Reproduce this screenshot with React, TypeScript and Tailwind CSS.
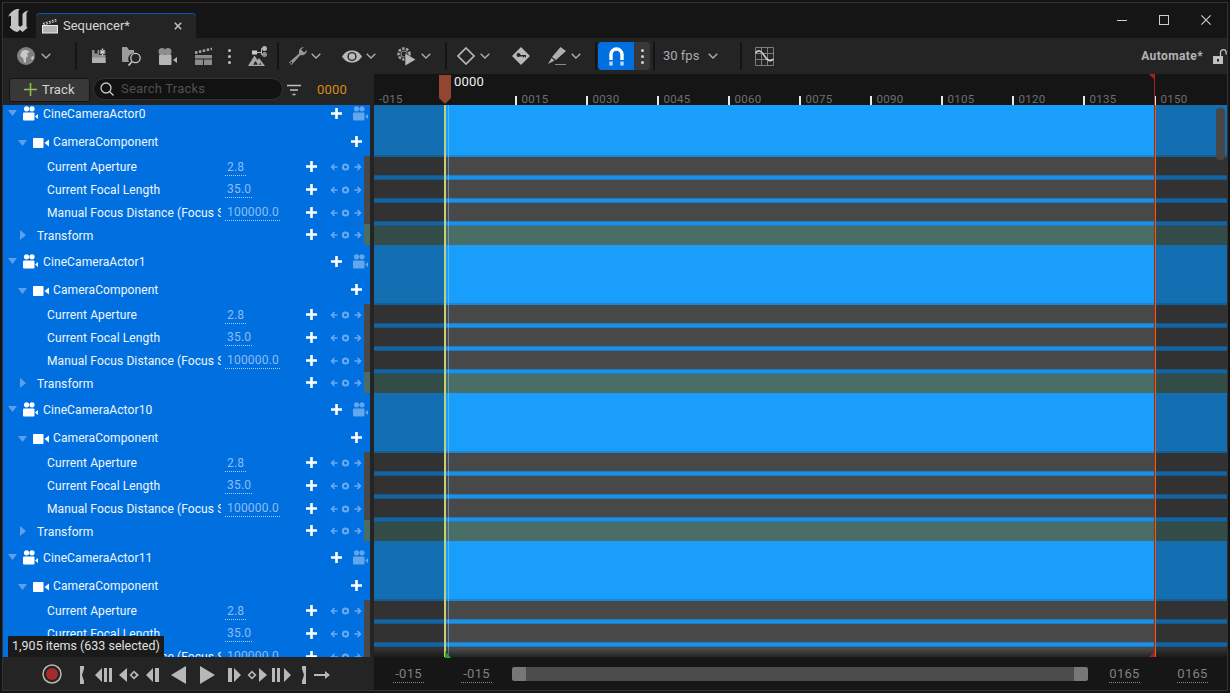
import React from "react";

const ticks = ["-015", "", "0015", "0030", "0045", "0060", "0075", "0090", "0105", "0120", "0135", "0150"];
const actors = ["CineCameraActor0", "CineCameraActor1", "CineCameraActor10", "CineCameraActor11"];

const Chevron = ({ className = "" }: { className?: string }) => (
    <svg width="10" height="6" viewBox="0 0 10 6" className={`shrink-0 ${className}`}>
        <path d="M.7.7 5 5l4.3-4.3" fill="none" stroke="#b0b0b0" strokeWidth="1.3" />
    </svg>
);

const Sep = ({ className = "" }: { className?: string }) => <div className={`w-[2px] h-[28px] shrink-0 bg-[#141414] ${className}`} />;

const UnrealLogo = () => (
    <svg width="24" height="25" viewBox="0 0 24 25" className="shrink-0">
        <path
            d="M10 1C6 2 2.500 5 1 9c1-1 2-1.500 2.500-1.200.5.400.5 1 .5 2v7c0 1-.7 1.700-1.500 2.200 2.500 3 5 4.500 8 5l2.500-2.200 2.500 2.200 5.500-4.500c-.8.300-1.500 0-1.500-1V6c0-1.500 1-2.500 2-3.500-2 .3-4.500 1.500-6 3.500v11l-2 1.700-2-1V4.500c0-1.500.2-2.500 1-3.500z"
            fill="#c4c4c4"
        />
        <path d="M7.500 7.500v10l2.200 1.800V5.500z" fill="#c4c4c4" />
    </svg>
);

const ClapperIcon = ({ fill = "#b4b4b4" }: { fill?: string }) => (
    <svg width="16" height="16" viewBox="0 0 16 16" className="shrink-0">
        <path d="m1 5.500 13-4 .5 1.500-13 4z" fill="none" stroke="#e0e0e0" strokeWidth="1" strokeDasharray="2 1" />
        <rect x=".5" y="7.500" width="15" height="7.500" fill={fill} stroke="#e8e8e8" />
    </svg>
);

const CameraGroup = ({ color = "#ffffff" }: { color?: string }) => (
    <svg width="15" height="15" viewBox="0 0 15 15" className="shrink-0">
        <circle cx="3.500" cy="2.800" r="2.600" fill={color} />
        <circle cx="9" cy="2.800" r="2.600" fill={color} />
        <rect x="0" y="6.500" width="11.500" height="8" rx="1" fill={color} />
        <path d="M15 8v5l-3-2.500z" fill={color} />
    </svg>
);

const CameraIcon = () => (
    <svg width="16" height="10" viewBox="0 0 16 10" className="shrink-0">
        <rect width="10.500" height="10" rx=".8" fill="#fff" />
        <path d="M16 1.500v7L11.500 5z" fill="#fff" />
    </svg>
);

const Plus = ({ className = "" }: { className?: string }) => (
    <svg width="11" height="11" viewBox="0 0 11 11" className={`shrink-0 ${className}`}>
        <path d="M4.200 0h2.600v4.200H11v2.600H6.800V11H4.200V6.800H0V4.200h4.200z" fill="#fff" />
    </svg>
);

const KeyNav = () => (
    <svg width="32" height="8" viewBox="0 0 32 8" className="shrink-0" fill="none" stroke="#6ea8ee" strokeWidth="1.500">
        <path d="M7.500 4H2M4.500 1 1.500 4l3 3" />
        <circle cx="15.500" cy="4" r="2.600" strokeWidth="2" />
        <path d="M24.500 4H30M27.500 1l3 3-3 3" />
    </svg>
);

const Caret = ({ open, className = "" }: { open: boolean; className?: string }) => (
    <svg width="9" height="10" viewBox="0 0 9 10" className={`shrink-0 ${className}`}>
        <path d={open ? "M0 2h9L4.500 8z" : "M1 0v10l6-5z"} fill="#5f9fe8" />
    </svg>
);

const PropRow = ({ label, value, valueW, h }: { label: string; value: string; valueW: string; h: string }) => (
    <div className={`flex items-center ${h}`}>
        <div className="w-[44px] shrink-0" />
        <div className="w-[174px] shrink-0 overflow-hidden whitespace-nowrap text-[12px] tracking-[0.1px] text-[#f2f6fc]">{label}</div>
        <div className={`ml-[4px] mt-[2px] h-[15px] ${valueW} shrink-0 border-b border-dotted border-[#a9cbf5] pl-[2px] text-[12px] leading-[13px] tracking-[0.2px] text-[#8fbcf2]`}>
            {value}
        </div>
        <div className="flex-1" />
        <Plus className="-mt-[1px] mr-[13px]" />
        <KeyNav />
        <div className="w-[2px] shrink-0" />
        <div className="w-[6px] shrink-0 self-stretch bg-[#484848]" />
    </div>
);

const ActorBlock = ({ name }: { name: string }) => (
    <div className="h-[148px] shrink-0">
        <div className="flex h-[32px] items-center">
            <Caret open className="ml-[5px]" />
            <div className="ml-[6px]">
                <CameraGroup />
            </div>
            <div className="ml-[5px] mt-[2px] flex-1 text-[12px] tracking-[0.1px] text-[#f2f6fc]">{name}</div>
            <Plus className="mr-[11px]" />
            <div className="mr-[2px] opacity-50">
                <CameraGroup color="#c5dcf8" />
            </div>
        </div>
        <div className="flex h-[27px] items-center">
            <Caret open className="ml-[15px]" />
            <div className="ml-[6px]">
                <CameraIcon />
            </div>
            <div className="-mt-[2px] ml-[4px] flex-1 text-[12px] tracking-[0.1px] text-[#f2f6fc]">CameraComponent</div>
            <Plus className="-mt-[2px] mr-[8px]" />
        </div>
        <PropRow label="Current Aperture" value="2.8" valueW="w-[21px]" h="h-[22px]" />
        <PropRow label="Current Focal Length" value="35.0" valueW="w-[27px]" h="h-[23px]" />
        <PropRow label="Manual Focus Distance (Focus Settings)" value="100000.0" valueW="w-[55px]" h="h-[23px]" />
        <div className="flex h-[21px] items-center">
            <Caret open={false} className="ml-[16px]" />
            <div className="ml-[9px] mt-[2px] flex-1 text-[12px] tracking-[0.1px] text-[#f2f6fc]">Transform</div>
            <Plus className="mr-[13px]" />
            <KeyNav />
            <div className="w-[2px] shrink-0" />
            <div className="w-[6px] shrink-0 self-stretch bg-[#4a6e66]" />
        </div>
    </div>
);

const Strip = () => <div className="h-[5px] border-y border-[#1e7cc2] bg-[#1c8fe6]" />;

const TimelineBlock = () => (
    <div className="h-[148px] shrink-0">
        <div className="h-[60px] border-b-2 border-[#1a87d6] bg-[#1a9efc]" />
        <div className="h-[18px] bg-[#484848]" />
        <Strip />
        <div className="h-[18px] bg-[#484848]" />
        <Strip />
        <div className="h-[18px] bg-[#484848]" />
        <Strip />
        <div className="h-[19px] bg-[#4a6e66]" />
    </div>
);

const Stepper = ({ value, className = "" }: { value: string; className?: string }) => (
    <div className={`mt-[2px] h-[17px] w-[31px] shrink-0 border-b border-dotted border-[#8a8a8a] text-center text-[13px] leading-[15px] tracking-[0.3px] text-[#808080] ${className}`}>
        {value}
    </div>
);

const Tri = ({ d, w, h, className = "" }: { d: string; w: number; h: number; className?: string }) => (
    <svg width={w} height={h} viewBox={`0 0 ${w} ${h}`} className={`mt-[2px] shrink-0 ${className}`}>
        <path d={d} fill="#b8b8b8" />
    </svg>
);

export default function App() {
    return (
        <div className="h-[693px] w-[1230px] overflow-hidden bg-[#141414] p-[2px] font-['Roboto',sans-serif]">
            <div className="flex h-full flex-col border border-[#333333]">
                {/* Title bar */}
                <div className="flex h-[35px] shrink-0 items-start bg-[#151515]">
                    <div className="ml-[4px] mt-[5px]">
                        <UnrealLogo />
                    </div>
                    <div className="ml-[5px] mt-[10px] flex h-[25px] w-[160px] items-center rounded-t-[4px] border-t border-[#0a5cb0] bg-[#242424] pl-[6px]">
                        <ClapperIcon />
                        <span className="ml-[5px] text-[13px] text-[#d6d6d6]">Sequencer*</span>
                        <svg width="8" height="8" viewBox="0 0 8 8" className="ml-[44px]" stroke="#c0c0c0" strokeWidth="1.600">
                            <path d="m.8.8 6.400 6.400M7.200.8.800 7.200" />
                        </svg>
                    </div>
                    <div className="flex-1" />
                    <div className="mr-[16px] mt-[12px] flex items-center gap-[32px]">
                        <div className="h-px w-[10px] bg-[#d0d0d0]" />
                        <div className="h-[10px] w-[10px] border border-[#d0d0d0]" />
                        <svg width="10" height="10" viewBox="0 0 11 11" stroke="#d0d0d0" strokeWidth="1.200">
                            <path d="m.4.4 10.200 10.200M10.600.4.400 10.600" />
                        </svg>
                    </div>
                </div>

                {/* Toolbar */}
                <div className="flex h-[36px] shrink-0 items-center bg-[#242424]">
                    <svg width="18" height="18" viewBox="0 0 18 18" className="ml-[14px] shrink-0">
                        <circle cx="9" cy="9" r="9" fill="#808080" />
                        <path d="M5 4c2-2 6-1 8 1l-3 1 1 3-2 2v5l-2-1-1-4-3-2 1-3zM15 9l2 1-1 3-2-1z" fill="#c8c8c8" />
                    </svg>
                    <Chevron className="ml-[6px]" />
                    <Sep className="ml-[24px]" />
                    <svg width="15" height="16" viewBox="0 0 15 16" className="ml-[15px] shrink-0">
                        <path d="M0 2h7v5h6.500v8H0z" fill="#8e8e8e" />
                        <rect x="2.500" y="2" width="3" height="3.500" fill="#242424" />
                        <rect x="0" y="9.500" width="13.500" height="5.500" fill="#b0b0b0" />
                        <path d="M10.500.5v1.500M10.500 6v1.500M7.500 4h1.500M12 4h1.500M8.500 2l1 1M12.500 2l-1 1M8.500 6l1-1M12.500 6l-1-1" stroke="#d8d8d8" strokeWidth="1.200" />
                        <circle cx="10.500" cy="4" r="1.600" fill="#d8d8d8" />
                    </svg>
                    <svg width="20" height="19" viewBox="0 0 20 19" className="ml-[15px] shrink-0">
                        <path d="M0 3V0h5l2 3h5v3a6 6 0 0 0-5 9H1a1 1 0 0 1-1-1z" fill="#9c9c9c" />
                        <circle cx="13.500" cy="11" r="4.700" fill="none" stroke="#c8c8c8" strokeWidth="1.300" />
                        <path d="m10 14.500-3.500 4" stroke="#c8c8c8" strokeWidth="1.700" />
                    </svg>
                    <svg width="19" height="17" viewBox="0 0 19 17" className="ml-[16px] shrink-0" fill="#b4b4b4">
                        <circle cx="4" cy="3.500" r="3.500" fill="#8e8e8e" />
                        <circle cx="10" cy="3.500" r="3.500" fill="#8e8e8e" />
                        <rect x="1" y="6.500" width="12.500" height="10.500" rx="1" />
                        <path d="M19 9v6l-4-3z" />
                    </svg>
                    <div className="ml-[17px]">
                        <svg width="19" height="19" viewBox="0 0 19 19" className="shrink-0">
                            <path d="m1 5.800 17-4" stroke="#a8a8a8" strokeWidth="2.500" strokeDasharray="2.500 1.500" />
                            <rect x="1" y="8" width="17" height="10" fill="#8c8c8c" />
                            <path d="M1 12h17M9.500 12v6" stroke="#242424" strokeWidth="1" />
                        </svg>
                    </div>
                    <div className="ml-[15px] flex w-[4px] flex-col gap-[3px]">
                        <div className="h-[3px] w-[3px] rounded-full bg-[#c0c0c0]" />
                        <div className="h-[3px] w-[3px] rounded-full bg-[#c0c0c0]" />
                        <div className="h-[3px] w-[3px] rounded-full bg-[#c0c0c0]" />
                    </div>
                    <svg width="20" height="20" viewBox="0 0 20 20" className="ml-[16px] shrink-0" fill="#b4b4b4">
                        <rect x="4" y="4.500" width="5" height="4" fill="#c8c8c8" />
                        <circle cx="16.500" cy="2.500" r="2.500" />
                        <circle cx="16.500" cy="8.500" r="2.500" fill="#8e8e8e" />
                        <path d="M9 6.500h4.500M13.500 2.500v6H15M13.500 2.500H15" fill="none" stroke="#b4b4b4" />
                        <path d="M0 20 6.500 9.500 9.500 14l1.500-2 6 8z" fill="#a8a8a8" />
                        <path d="M5 18.800 7.500 15l2.500 3.800zM11 18.800l1.200-2 1.300 2z" fill="#242424" />
                    </svg>
                    <Sep className="ml-[9px]" />
                    <svg width="22" height="20" viewBox="0 0 22 20" className="ml-[9px] shrink-0">
                        <path d="M16 1a5 5 0 0 0-5 6.500L1 16.500 3.500 19l9-10a5 5 0 0 0 6.500-5l-3 2.500-3-3z" fill="#969696" />
                        <circle cx="3.300" cy="16.700" r="1" fill="#242424" />
                    </svg>
                    <Chevron className="ml-[1px]" />
                    <svg width="20" height="13" viewBox="0 0 20 13" className="ml-[21px] shrink-0">
                        <path d="M0 6.500C3 2 6 .5 10 .5S17 2 20 6.500C17 11 14 12.500 10 12.500S3 11 0 6.500z" fill="#b8b8b8" />
                        <circle cx="10" cy="6.500" r="4.600" fill="#242424" />
                        <circle cx="10" cy="6.500" r="3.200" fill="#b8b8b8" />
                    </svg>
                    <Chevron className="ml-[4px]" />
                    <svg width="19" height="20" viewBox="0 0 19 20" className="ml-[21px] shrink-0">
                        <circle cx="7" cy="8" r="5.500" fill="none" stroke="#a8a8a8" strokeWidth="2.500" strokeDasharray="2.500 1.400" />
                        <circle cx="7" cy="8" r="3" fill="none" stroke="#8a8a8a" strokeWidth="1.200" />
                        <path d="M8 7v13l11-6.500z" fill="#b8b8b8" stroke="#242424" strokeWidth=".6" />
                    </svg>
                    <Chevron className="ml-[5px]" />
                    <Sep className="ml-[14px]" />
                    <svg width="18" height="18" viewBox="0 0 18 18" className="ml-[10px] shrink-0">
                        <path d="M9 1 17 9l-8 8-8-8z" fill="none" stroke="#b8b8b8" strokeWidth="1.700" />
                    </svg>
                    <Chevron className="ml-[5px]" />
                    <svg width="18" height="18" viewBox="0 0 18 18" className="ml-[22px] shrink-0">
                        <path d="M9 0 18 9l-9 9-9-9z" fill="#b8b8b8" />
                        <circle cx="6.500" cy="8" r="2" fill="#242424" />
                        <path d="M8 8h6v2.500h-1V9.500h-1v1h-1V9.500H8z" fill="#242424" />
                    </svg>
                    <svg width="18" height="18" viewBox="0 0 18 18" className="ml-[18px] shrink-0">
                        <path d="M12.500 0 18 4 8 13l-4-3zM3.500 11l3 2.500L0 17z" fill="#b0b0b0" />
                        <path d="M7 17.500h11" stroke="#8a8a8a" strokeWidth="1" />
                    </svg>
                    <Chevron className="ml-[5px]" />
                    <Sep className="ml-[14px]" />
                    <div className="ml-px flex h-[28px] w-[36px] items-center justify-center rounded-l-[4px] bg-[#0070e0]">
                        <svg width="15" height="19" viewBox="0 0 15 19">
                            <path d="M2 13V7.500a5.500 5.500 0 0 1 11 0V13" fill="none" stroke="#ffffff" strokeWidth="3.400" />
                            <rect x=".3" y="14.500" width="3.400" height="4" fill="#b8dcff" />
                            <rect x="11.300" y="14.500" width="3.400" height="4" fill="#b8dcff" />
                        </svg>
                    </div>
                    <div className="flex h-[28px] w-[16px] flex-col items-center justify-center gap-[3px] rounded-r-[4px] bg-[#383838]">
                        <div className="h-[3px] w-[3px] rounded-full bg-[#d0d0d0]" />
                        <div className="h-[3px] w-[3px] rounded-full bg-[#d0d0d0]" />
                        <div className="h-[3px] w-[3px] rounded-full bg-[#d0d0d0]" />
                    </div>
                    <Sep className="ml-[3px]" />
                    <div className="ml-[8px] w-[45px] shrink-0 text-[13px] text-[#ababab]">30 fps</div>
                    <Chevron />
                    <Sep className="ml-[22px]" />
                    <svg width="19" height="19" viewBox="0 0 19 19" className="ml-[13px] shrink-0">
                        <path d="M.5.5h18v18H.5zM.5 6.500h18M.5 12.500h18M6.500.5v18M12.500.5v18" fill="none" stroke="#7c7c7c" />
                        <path d="M.5 6c3-4 6-2 9 3s6 6 9 3" fill="none" stroke="#d0d0d0" strokeWidth="1.500" />
                    </svg>
                    <div className="flex-1" />
                    <div className="text-[12px] font-bold tracking-[0.4px] text-[#b4b4b4]">Automate*</div>
                    <svg width="14" height="15" viewBox="0 0 14 15" className="ml-[10px] shrink-0">
                        <rect x="0" y="7" width="10" height="8" fill="#c0c0c0" />
                        <rect x="4" y="10" width="2" height="2.500" fill="#242424" />
                        <path d="M7.500 7V3.500a2.800 2.800 0 0 1 5.600 0v2" fill="none" stroke="#c0c0c0" strokeWidth="1.300" />
                    </svg>
                </div>

                {/* Body */}
                <div className="flex min-h-0 flex-1">
                    {/* Left column */}
                    <div className="flex w-[367px] shrink-0 flex-col">
                        <div className="flex h-[31px] shrink-0 items-center bg-[#242424]">
                            <div className="ml-[6px] flex h-[24px] w-[81px] shrink-0 items-center rounded-[3px] border border-[#151515] bg-[#383838] pl-[14px]">
                                <svg width="13" height="13" viewBox="0 0 13 13" className="shrink-0">
                                    <path d="M5.700 0h1.600v5.700H13v1.600H7.300V13H5.700V7.300H0V5.700h5.700z" fill="#8cc152" />
                                </svg>
                                <span className="ml-[5px] text-[13px] tracking-[0.2px] text-[#d4d4d4]">Track</span>
                            </div>
                            <div className="-mt-[2px] ml-[3px] flex h-[22px] w-[190px] shrink-0 items-center rounded-full border border-[#333333] bg-[#121212] pl-[6px]">
                                <svg width="14" height="14" viewBox="0 0 14 14" className="shrink-0" fill="none" stroke="#c8c8c8" strokeWidth="1.300">
                                    <circle cx="6" cy="6" r="5" />
                                    <path d="m9.500 9.500 4 4" />
                                </svg>
                                <span className="ml-[7px] text-[13px] tracking-[0.2px] text-[#505050]">Search Tracks</span>
                            </div>
                            <svg width="14" height="12" viewBox="0 0 14 12" className="ml-[4px] shrink-0" stroke="#c0c0c0" strokeWidth="1.400">
                                <path d="M0 1.500h14M3 6h8M5.500 10.500h3" />
                            </svg>
                            <span className="ml-[16px] text-[13px] tracking-[0.2px] text-[#d68a14]">0000</span>
                        </div>

                        <div className="h-[552px] shrink-0 overflow-hidden bg-[#0070e0]">
                            <div className="-mt-[8px] flex flex-col">
                                {actors.map((name) => (
                                    <ActorBlock key={name} name={name} />
                                ))}
                            </div>
                        </div>

                        <div className="flex h-[33px] shrink-0 items-center bg-[#242424] pl-[39px]">
                            <svg width="20" height="20" viewBox="0 0 20 20" className="shrink-0">
                                <circle cx="10" cy="10" r="9" fill="none" stroke="#b8b8b8" strokeWidth="1.500" />
                                <circle cx="10" cy="10" r="6" fill="#a82a2a" />
                            </svg>
                            <Tri className="ml-[18px]" w={5} h={18} d="M0 0h4v3L2 9l2 6v3H0z" />
                            <Tri className="ml-[10px]" w={19} h={14} d="M7 0v14L0 7zM9 0h3v14H9zM14 0h3v14h-3z" />
                            <Tri className="ml-[5px]" w={20} h={14} d="M8 0v14L0 7zM15 2.500 20 7l-5 4.500L10.500 7zM15 4.800 12.800 7 15 9.200 17.200 7z" />
                            <Tri className="ml-[7px]" w={13} h={14} d="M7 0v14L0 7zM9 0h4v14H9z" />
                            <Tri className="ml-[12px]" w={15} h={18} d="M15 0v18L0 9z" />
                            <Tri className="ml-[14px]" w={15} h={18} d="M0 0v18L15 9z" />
                            <Tri className="ml-[13px]" w={13} h={14} d="M0 0h4v14H0zM6 0v14l7-7z" />
                            <Tri className="ml-[6px]" w={20} h={14} d="M12 0v14l8-7zM5 2.500 9.500 7 5 11.500.5 7zM5 4.800 2.800 7 5 9.200 7.200 7z" />
                            <Tri className="ml-[5px]" w={19} h={14} d="M0 0h3v14H0zM5 0h3v14H5zM12 0v14l7-7z" />
                            <Tri className="ml-[10px]" w={5} h={18} d="M1 0h4v18H1v-3l2-6-2-6z" />
                            <svg width="16" height="8" viewBox="0 0 16 8" className="ml-[8px] mt-[2px] shrink-0">
                                <path d="M0 3h11V0l5 4-5 4V5H0z" fill="#b8b8b8" />
                            </svg>
                        </div>
                    </div>

                    <div className="w-[4px] shrink-0 bg-[#242424]" />

                    {/* Timeline column */}
                    <div className="relative flex min-w-0 flex-1 flex-col">
                        {/* Ruler */}
                        <div className="flex h-[31px] shrink-0 items-end overflow-hidden bg-[#151515]">
                            {ticks.map((t, i) => (
                                <div key={i} className="-ml-[0.1px] flex h-[9px] w-[71.1px] shrink-0 items-end first:-ml-[1px]">
                                    {i > 0 && t !== "" && <div className="h-[9px] w-[1.500px] shrink-0 bg-[#e8e8e8]" />}
                                    {t !== "" && <span className={`${i === 0 ? "ml-[6px]" : "ml-[5px]"} text-[11.500px] leading-[12px] tracking-[0.3px] text-[#6e6e6e]`}>{t}</span>}
                                </div>
                            ))}
                        </div>

                        {/* Tracks */}
                        <div className="relative h-[552px] shrink-0 overflow-hidden bg-[#1a9efc]">
                            <div className="-mt-[8px] flex flex-col">
                                {actors.map((name) => (
                                    <TimelineBlock key={name} />
                                ))}
                            </div>
                            <div className="absolute bottom-0 left-0 top-0 w-[70px] bg-black/30" />
                            <div className="absolute bottom-0 left-[781px] right-0 top-0 bg-black/30" />
                            <div className="absolute bottom-0 left-[74px] top-0 w-px bg-[#8fd0ff]/50" />
                            <div className="absolute bottom-0 left-0 right-0 h-[8px] bg-gradient-to-b from-transparent to-black/50" />
                            <div className="absolute right-[2px] top-[3px] h-[52px] w-[9px] rounded-[4px] bg-[#474747]" />
                        </div>

                        {/* Bottom bar */}
                        <div className="flex h-[33px] shrink-0 items-center bg-[#161616]">
                            <Stepper value="-015" className="ml-[19px]" />
                            <Stepper value="-015" className="ml-[37px]" />
                            <div className="ml-[20px] flex h-[14px] w-[576px] shrink-0 justify-between rounded-[2px] bg-[#4c4c4c]">
                                <div className="h-full w-[14px] rounded-l-[3px] bg-[#777777]" />
                                <div className="h-full w-[14px] rounded-r-[3px] bg-[#777777]" />
                            </div>
                            <Stepper value="0165" className="ml-[21px]" />
                            <Stepper value="0165" className="ml-[37px]" />
                        </div>

                        {/* Markers over ruler and tracks */}
                        <div className="absolute left-[70px] top-[31px] h-[552px] w-[2px] bg-[#c3cf7c]" />
                        <svg width="12" height="30" viewBox="0 0 12 30" className="absolute left-[65px] top-px">
                            <path d="M0 0h12v23l-6 6-6-6z" fill="#94452f" />
                        </svg>
                        <span className="absolute left-[80px] top-0 text-[13px] leading-[16px] tracking-[0.2px] text-[#f0f0f0]">0000</span>
                        <svg width="7" height="7" viewBox="0 0 7 7" className="absolute left-[71px] top-[577px]">
                            <path d="M0 0 6 7H0z" fill="#2ea02e" />
                        </svg>
                        <div className="absolute bottom-[33px] left-[780px] top-0 w-px bg-[#a82020]" />
                        <div className="absolute left-[781px] top-[31px] h-[552px] w-px bg-[#b0782a]" />
                        <svg width="6" height="6" viewBox="0 0 6 6" className="absolute left-[775px] top-0">
                            <path d="M0 0h6v6z" fill="#a82020" />
                        </svg>
                        <svg width="6" height="6" viewBox="0 0 6 6" className="absolute left-[775px] top-[577px]">
                            <path d="M0 6h6V0z" fill="#a82020" />
                        </svg>
                    </div>
                </div>
            </div>

            {/* Item count tooltip */}
            <div className="absolute left-[8px] top-[636px] flex h-[21px] w-[156px] items-center justify-center bg-[#1a1a1a] text-[12.500px] text-[#e0e0e0]">
                1,905 items (633 selected)
            </div>
        </div>
    );
}
